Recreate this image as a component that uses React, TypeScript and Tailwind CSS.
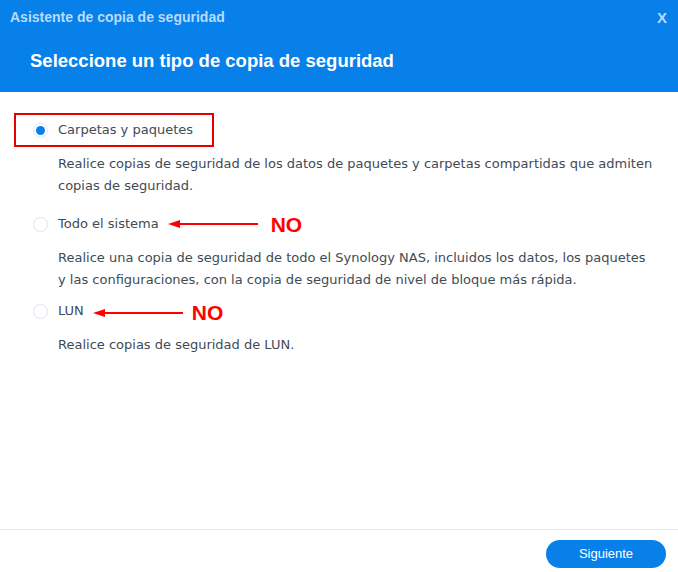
import React, { useState } from 'react';

const options = [
  {
    id: 'folders',
    label: 'Carpetas y paquetes',
    desc: 'Realice copias de seguridad de los datos de paquetes y carpetas compartidas que admiten copias de seguridad.',
  },
  {
    id: 'system',
    label: 'Todo el sistema',
    desc: 'Realice una copia de seguridad de todo el Synology NAS, incluidos los datos, los paquetes y las configuraciones, con la copia de seguridad de nivel de bloque más rápida.',
  },
  {
    id: 'lun',
    label: 'LUN',
    desc: 'Realice copias de seguridad de LUN.',
  },
];

const Arrow = ({ width }: { width: number }) => (
  <svg width={width} height="10" viewBox={`0 0 ${width} 10`}>
    <line x1="6" y1="5" x2={width} y2="5" stroke="#ff0000" strokeWidth="2" />
    <polygon points="0,5 12,1 12,9" fill="#ff0000" />
  </svg>
);

export default function App() {
  const [selected, setSelected] = useState('folders');

  return (
    <div className="w-[678px] h-[572px] bg-white flex flex-col font-['DejaVu_Sans',sans-serif] text-[#414b55] overflow-hidden">
      {/* header */}
      <div className="bg-[#0780ea] h-[92px] flex flex-col">
        <div className="h-[35px] flex items-center justify-between pl-[10px] pr-[11px]">
          <span className="font-['Liberation_Sans',sans-serif] font-bold text-[14px] text-[#b8dbff]">
            Asistente de copia de seguridad
          </span>
          <span className="font-['Liberation_Sans',sans-serif] font-bold text-[15px] text-[#b8dbff] leading-none">X</span>
        </div>
        <div className="pl-[30px] pt-[17px]">
          <h1 className="font-['Liberation_Sans',sans-serif] font-bold text-[18.5px] text-white leading-none">
            Seleccione un tipo de copia de seguridad
          </h1>
        </div>
      </div>

      {/* body */}
      <div className="flex-1 pt-[21px]">
        {options.map((o, i) => (
          <div key={o.id} className={i === 0 ? '' : i === 1 ? 'mt-[10px]' : 'mt-[3px]'}>
            <div className="flex items-center h-[34px]">
              <div
                className={
                  'flex items-center h-[34px] pl-[17px] ' +
                  (i === 0 ? 'ml-[14px] w-[200px] border-2 border-[#e60000]' : 'ml-[16px]')
                }
              >
                <button
                  onClick={() => setSelected(o.id)}
                  className={
                    'w-[15px] h-[15px] rounded-full border flex items-center justify-center ' +
                    (selected === o.id ? 'border-[#dfe4f0]' : 'border-[#dfe3ee] bg-white')
                  }
                >
                  {selected === o.id && <span className="w-[9px] h-[9px] rounded-full bg-[#0780ea]" />}
                </button>
                <span className="ml-[10px] text-[13px]">{o.label}</span>
                {o.id === 'system' && (
                  <span className="ml-[9px] flex items-center">
                    <Arrow width={90} />
                    <span className="ml-[13px] font-['Liberation_Sans',sans-serif] font-bold text-[21px] text-[#ff0000] leading-none">NO</span>
                  </span>
                )}
                {o.id === 'lun' && (
                  <span className="ml-[9px] flex items-center mt-[3px]">
                    <Arrow width={90} />
                    <span className="ml-[9px] font-['Liberation_Sans',sans-serif] font-bold text-[21px] text-[#ff0000] leading-none">NO</span>
                  </span>
                )}
              </div>
            </div>
            <p className="ml-[58px] w-[595px] mt-[6px] text-[13px] leading-[22px]">{o.desc}</p>
          </div>
        ))}
      </div>

      {/* footer */}
      <div className="border-t border-[#e6e8ef] h-[43px] flex items-center justify-end pr-[12px] pb-[1px]">
        <button className="w-[120px] h-[28px] mt-[6px] rounded-full bg-[#0780ea] text-white text-[13px] font-['Liberation_Sans',sans-serif]">
          Siguiente
        </button>
      </div>
    </div>
  );
}
